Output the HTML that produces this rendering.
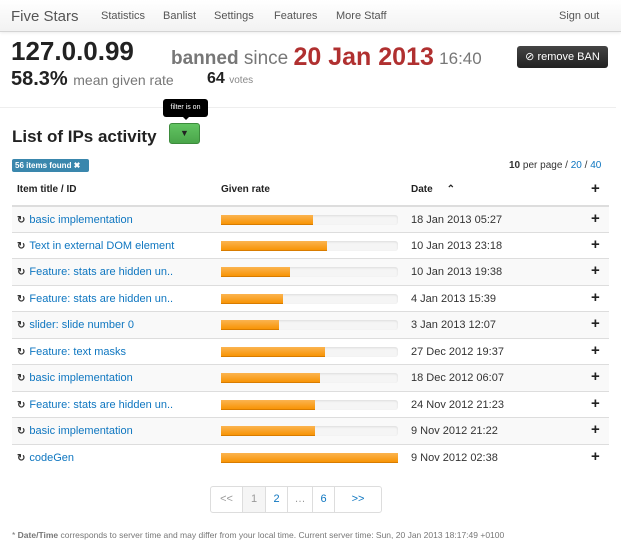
<!DOCTYPE html>
<html><head><meta charset="utf-8"><style>
*{margin:0;padding:0;box-sizing:border-box}
body{width:621px;height:555px;background:#fff;font-family:"Liberation Sans",Arial,sans-serif;color:#333;position:relative;overflow:hidden}
.a{position:absolute;white-space:nowrap}
.nav{position:absolute;left:0;top:0;width:621px;height:32px;background:linear-gradient(#fff,#f2f2f2);border-bottom:1px solid #d4d4d4;box-shadow:0 1px 3px rgba(0,0,0,.08)}
.nav span{position:absolute;top:10px;font-size:11px;color:#555}
.row{position:absolute;left:12px;width:597px;height:26.5px;border-top:1px solid #ddd}
.row.s{background:#f9f9f9}
.row .t{position:absolute;left:5px;top:7px;font-size:11px;color:#0e76c0}
.row .t b{color:#333;font-size:10px;margin-right:4px}
.row .bar{position:absolute;left:209px;top:8px;width:177px;height:10px;background:#f5f5f5;border-radius:3px;box-shadow:inset 0 1px 2px rgba(0,0,0,.1)}
.row .bar i{display:block;height:10px;background:linear-gradient(#fbb450,#f89406);border-bottom:1px solid #d87c00}
.row .d{position:absolute;left:399px;top:7px;font-size:11px;color:#333}
.row .p{position:absolute;left:579px;top:3px;font-size:15px;font-weight:bold;color:#222}
.pg{position:absolute;top:486px;height:27px;border:1px solid #ddd;font-size:11px;text-align:center;line-height:25px;color:#0e76c0}
</style></head><body>
<div class="nav">
<span style="left:11px;top:8px;font-size:15px;color:#555">Five Stars</span>
<span style="left:101px">Statistics</span>
<span style="left:163px">Banlist</span>
<span style="left:214px">Settings</span>
<span style="left:274px">Features</span>
<span style="left:336px">More Staff</span>
<span style="left:559px">Sign out</span>
</div>
<div class="a" style="left:11px;top:36px;font-size:26px;font-weight:bold;color:#222">127.0.0.99</div>
<div class="a" style="left:171px;top:42px;font-size:19px;color:#777"><b>banned</b> since <b style="color:#b03030;font-size:25px;position:relative;top:1px">20 Jan 2013</b> <span style="font-size:17px">16:40</span></div>
<div class="a" style="left:517px;top:46px;width:91px;height:22px;background:linear-gradient(#444,#222);border-radius:3px;color:#fff;font-size:11px;text-align:center;line-height:22px">⊘ remove BAN</div>
<div class="a" style="left:11px;top:68px;font-size:20px;font-weight:bold;color:#222">58.3% <span style="font-weight:normal;font-size:14px;color:#777">mean given rate</span></div>
<div class="a" style="left:207px;top:70px;font-size:16px;font-weight:bold;color:#222">64 <span style="font-weight:normal;font-size:10px;color:#888">votes</span></div>
<div class="a" style="left:0;top:107px;width:616px;border-top:1px solid #eee"></div>
<div class="a" style="left:163px;top:99px;width:45px;height:18px;background:#000;border-radius:3px;color:#fff;font-size:7px;text-align:center;line-height:18px">filter is on</div>
<div class="a" style="left:182px;top:116px;border:4px solid transparent;border-top-color:#000;border-bottom:0"></div>
<div class="a" style="left:12px;top:127px;font-size:17px;font-weight:bold;color:#222">List of IPs activity</div>
<div class="a" style="left:169px;top:123px;width:31px;height:21px;background:linear-gradient(#62c462,#4aa54a);border:1px solid #3d8b3d;border-radius:3px;color:#222;font-size:9px;text-align:center;line-height:19px">▼</div>
<div class="a" style="left:12px;top:159px;width:77px;height:13px;background:#3a87ad;border-radius:2px;color:#fff;font-size:8px;font-weight:bold;line-height:13px;padding-left:3px">56 items found ✖</div>
<div class="a" style="left:509px;top:160px;font-size:10px;color:#333"><b>10</b> per page / <span style="color:#0e76c0">20</span> / <span style="color:#0e76c0">40</span></div>
<div class="a" style="left:17px;top:184px;font-size:10px;font-weight:bold;color:#222">Item title / ID</div>
<div class="a" style="left:221px;top:184px;font-size:10px;font-weight:bold;color:#222">Given rate</div>
<div class="a" style="left:411px;top:184px;font-size:10px;font-weight:bold;color:#222">Date &nbsp;&nbsp;&nbsp;&nbsp;⌃</div>
<div class="a" style="left:591px;top:180px;font-size:15px;font-weight:bold;color:#222">+</div>
<div class="row s" style="top:205px;border-top:2px solid #ddd"><div class="t"><b>↻</b>basic implementation</div><div class="bar"><i style="width:92px"></i></div><div class="d">18 Jan 2013 05:27</div><div class="p">+</div></div>
<div class="row" style="top:232px"><div class="t"><b>↻</b>Text in external DOM element</div><div class="bar"><i style="width:106px"></i></div><div class="d">10 Jan 2013 23:18</div><div class="p">+</div></div>
<div class="row s" style="top:258px"><div class="t"><b>↻</b>Feature: stats are hidden un..</div><div class="bar"><i style="width:69px"></i></div><div class="d">10 Jan 2013 19:38</div><div class="p">+</div></div>
<div class="row" style="top:285px"><div class="t"><b>↻</b>Feature: stats are hidden un..</div><div class="bar"><i style="width:62px"></i></div><div class="d">4 Jan 2013 15:39</div><div class="p">+</div></div>
<div class="row s" style="top:311px"><div class="t"><b>↻</b>slider: slide number 0</div><div class="bar"><i style="width:58px"></i></div><div class="d">3 Jan 2013 12:07</div><div class="p">+</div></div>
<div class="row" style="top:338px"><div class="t"><b>↻</b>Feature: text masks</div><div class="bar"><i style="width:104px"></i></div><div class="d">27 Dec 2012 19:37</div><div class="p">+</div></div>
<div class="row s" style="top:364px"><div class="t"><b>↻</b>basic implementation</div><div class="bar"><i style="width:99px"></i></div><div class="d">18 Dec 2012 06:07</div><div class="p">+</div></div>
<div class="row" style="top:391px"><div class="t"><b>↻</b>Feature: stats are hidden un..</div><div class="bar"><i style="width:94px"></i></div><div class="d">24 Nov 2012 21:23</div><div class="p">+</div></div>
<div class="row s" style="top:417px"><div class="t"><b>↻</b>basic implementation</div><div class="bar"><i style="width:94px"></i></div><div class="d">9 Nov 2012 21:22</div><div class="p">+</div></div>
<div class="row" style="top:444px"><div class="t"><b>↻</b>codeGen</div><div class="bar"><i style="width:177px"></i></div><div class="d">9 Nov 2012 02:38</div><div class="p">+</div></div>
<div class="pg" style="left:210px;width:33px;color:#999;border-radius:3px 0 0 3px">&lt;&lt;</div>
<div class="pg" style="left:242px;width:24px;background:#f5f5f5;color:#999">1</div>
<div class="pg" style="left:265px;width:23px">2</div>
<div class="pg" style="left:287px;width:26px;color:#999">…</div>
<div class="pg" style="left:312px;width:23px">6</div>
<div class="pg" style="left:334px;width:48px;border-radius:0 3px 3px 0">&gt;&gt;</div>
<div class="a" style="left:12px;top:530px;font-size:8.5px;color:#777">* <b>Date/Time</b> corresponds to server time and may differ from your local time. Current server time: Sun, 20 Jan 2013 18:17:49 +0100</div>
</body></html>
